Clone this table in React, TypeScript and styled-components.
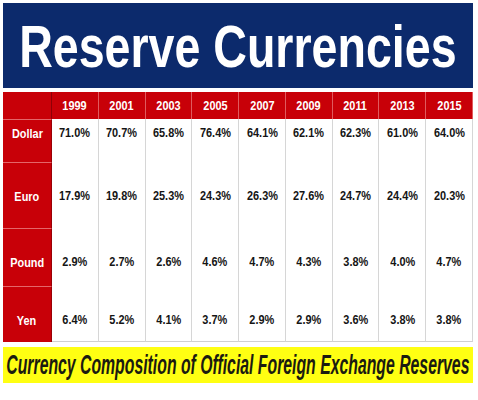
import React from 'react'
import styled, { createGlobalStyle } from 'styled-components'

const GlobalStyle = createGlobalStyle`
  html, body {
    margin: 0;
    padding: 0;
    background: #ffffff;
  }
`

const years = ['1999', '2001', '2003', '2005', '2007', '2009', '2011', '2013', '2015']

const rows = [
  { name: 'Dollar', height: 43, offset: 7, values: ['71.0%', '70.7%', '65.8%', '76.4%', '64.1%', '62.1%', '62.3%', '61.0%', '64.0%'] },
  { name: 'Euro', height: 66, offset: 27, values: ['17.9%', '19.8%', '25.3%', '24.3%', '26.3%', '27.6%', '24.7%', '24.4%', '20.3%'] },
  { name: 'Pound', height: 58, offset: 27, values: ['2.9%', '2.7%', '2.6%', '4.6%', '4.7%', '4.3%', '3.8%', '4.0%', '4.7%'] },
  { name: 'Yen', height: 56, offset: 27, values: ['6.4%', '5.2%', '4.1%', '3.7%', '2.9%', '2.9%', '3.6%', '3.8%', '3.8%'] },
]

const Page = styled.div`
  width: 478px;
  height: 400px;
  box-sizing: border-box;
  padding: 3px 5px 0 3px;
  display: flex;
  flex-direction: column;
  background: #ffffff;
  font-family: 'Liberation Sans', Arial, sans-serif;
`

const TitleBar = styled.div`
  height: 85px;
  background: #0c2a6c;
  display: flex;
  align-items: center;
  justify-content: center;
  overflow: hidden;
`

// the artwork uses a condensed face, so squeeze the regular one
const Title = styled.h1`
  margin: 0;
  flex: none;
  white-space: nowrap;
  color: #ffffff;
  font-size: 60px;
  font-weight: 700;
  line-height: 1;
  padding-top: 3px;
  transform: scaleX(0.776);
`

const Table = styled.div`
  margin-top: 4px;
  display: grid;
  grid-template-columns: 49px repeat(9, 1fr);
`

const Narrow = styled.span`
  display: inline-block;
  white-space: nowrap;
  transform: scaleX(0.84);
`

const HeadCell = styled.div<{ first?: boolean }>`
  height: 27px;
  background: #c80008;
  color: #ffffff;
  font-size: 13px;
  font-weight: 700;
  display: flex;
  align-items: center;
  justify-content: center;
  border-right: 1px solid ${p => (p.first ? '#8e0006' : '#e05a5e')};
  box-sizing: border-box;
`

const LabelCell = styled.div<{ h: number; offset: number }>`
  height: ${p => p.h}px;
  padding-top: ${p => p.offset}px;
  box-sizing: border-box;
  background: #c80008;
  color: #ffffff;
  font-size: 13px;
  font-weight: 700;
  line-height: 14px;
  text-align: center;
  border-top: 1px solid #e4666a;
  border-right: 1px solid #9a0006;
`

const DataCell = styled.div<{ h: number; offset: number; last?: boolean }>`
  height: ${p => p.h}px;
  padding-top: ${p => p.offset}px;
  box-sizing: border-box;
  background: #ffffff;
  color: #151515;
  font-size: 13px;
  font-weight: 700;
  line-height: 14px;
  text-align: center;
  border-right: 1px solid #d6d6d6;
  border-bottom: ${p => (p.last ? '1px solid #d0d0d0' : 'none')};
`

const Banner = styled.div`
  margin-top: 5px;
  height: 36px;
  background: #ffff12;
  display: flex;
  align-items: center;
  justify-content: center;
  overflow: hidden;
`

const BannerText = styled.span`
  flex: none;
  white-space: nowrap;
  color: #1b1b10;
  font-size: 27px;
  font-weight: 700;
  font-style: italic;
  line-height: 1;
  transform: scaleX(0.585);
`

export default function App() {
  return (
    <>
      <GlobalStyle />
      <Page>
        <TitleBar>
          <Title>Reserve Currencies</Title>
        </TitleBar>
        <Table>
          <HeadCell first />
          {years.map(y => (
            <HeadCell key={y}>
              <Narrow>{y}</Narrow>
            </HeadCell>
          ))}
          {rows.map((r, i) => (
            <React.Fragment key={r.name}>
              <LabelCell h={r.height} offset={r.offset}>
                <Narrow>{r.name}</Narrow>
              </LabelCell>
              {r.values.map((v, j) => (
                <DataCell key={j} h={r.height} offset={r.offset} last={i === rows.length - 1}>
                  <Narrow>{v}</Narrow>
                </DataCell>
              ))}
            </React.Fragment>
          ))}
        </Table>
        <Banner>
          <BannerText>Currency Composition of Official Foreign Exchange Reserves</BannerText>
        </Banner>
      </Page>
    </>
  )
}
